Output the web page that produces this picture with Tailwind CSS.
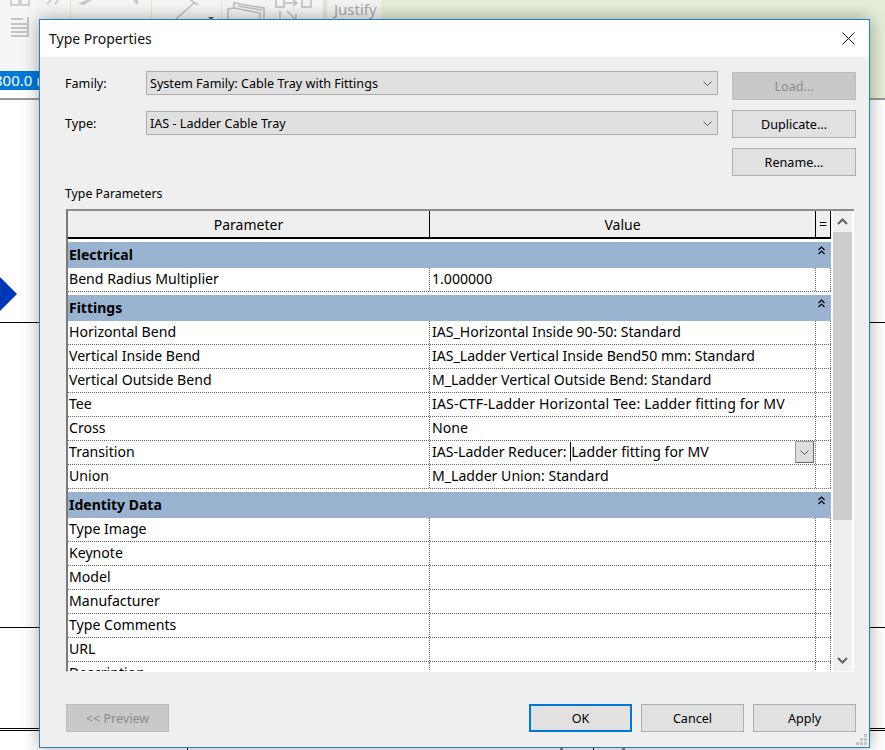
<!DOCTYPE html>
<html lang="en">

<head>
  <meta charset="UTF-8" />
  <meta name="viewport" content="width=device-width, initial-scale=1" />
  <title>Type Properties</title>
  <script src="https://cdn.jsdelivr.net/npm/@tailwindcss/browser@4"></script>
</head>

<body class="relative w-[885px] h-[750px] overflow-hidden bg-white font-['Noto_Sans',sans-serif] text-black">

  <!-- Ribbon behind the dialog -->
  <div class="flex h-[100px] border-b-2 border-[#9a9a9a] bg-[#f5f5f5]">
    <div class="w-[71px] border-r border-[#dfe8d0] pl-[10px]">
      <svg width="50" height="38" viewBox="0 0 50 38" fill="none" stroke="#c4c4c4" stroke-width="1.5">
        <path d="M1 -2v7h8v-7M11 -2v7h8v-7" />
        <path d="M1 19h12M1 24h18M1 28h18M1 32h18M1 36h18M18 17v20" stroke-width="2" />
        <path d="M37 4l4-4M45 4l3-4" />
      </svg>
    </div>
    <div class="w-[81px] border-r border-[#dfe8d0] pl-[7px]">
      <svg width="60" height="8" viewBox="0 0 60 8" fill="#c8c8c8"><path d="M0 4 8 0H14L6 5ZM55 0h7l-3 5z" /></svg>
    </div>
    <div class="w-[70px] border-r border-[#dfe8d0] pl-[23px]">
      <svg width="40" height="24" viewBox="0 0 40 24" fill="none" stroke="#bdbdbd" stroke-width="1.5">
        <path d="M1 19 20 2M14 -1 23 5" />
        <path d="M33 17h6l-3 3z" fill="#555" stroke="none" />
      </svg>
    </div>
    <div class="flex w-[105px] items-start border-r-4 border-[#dfe8d0] pl-[5px]">
      <svg width="92" height="20" viewBox="0 0 92 20" fill="none" stroke="#bdbdbd" stroke-width="1.5">
        <path d="M1 19V9l6 -1V3l30 5v11M7 8l26 5v6M11 6l24 4" />
        <path d="M49 0v7h8V0M58 3h12M66 0l4 3-4 3M75 0v7h9V0M53 11v9M60 11l9 9M69 14v6h-5" />
      </svg>
    </div>
    <div class="w-[54px] bg-[#f2f2f2] pl-[7px] text-[15px] leading-[18px] text-[#a8a8a8]">Justify</div>
    <div class="flex-1 bg-[#e4edd6]"></div>
  </div>

  <!-- Selected dimension field -->
  <div class="absolute left-0 top-[71px] h-[27px] w-[39px] bg-white">
    <div class="h-[19px] overflow-hidden bg-[#0078d7] text-[15px] leading-[19px] whitespace-nowrap text-white -indent-[6px]">800.0 r</div>
  </div>

  <!-- Drawing behind the dialog -->
  <div class="absolute left-0 top-[277px] h-0 w-0 border-y-[17px] border-l-[17px] border-y-transparent border-l-[#0038b8]"></div>
  <div class="absolute left-0 top-[322px] h-px w-[40px] bg-black"></div>
  <div class="absolute left-[869px] top-[322px] h-px w-[16px] bg-black"></div>
  <div class="absolute left-0 top-[627px] h-px w-[40px] bg-black"></div>
  <div class="absolute left-[869px] top-[627px] h-px w-[16px] bg-black"></div>
  <div class="absolute left-0 top-[728px] h-[3px] w-[40px] border-y border-black"></div>
  <div class="absolute left-[869px] top-[728px] h-[3px] w-[16px] border-y border-black"></div>
  <div class="absolute left-[187px] top-[747px] h-[3px] w-px bg-black"></div>
  <div class="absolute left-[560px] top-[747px] h-[3px] w-[3px] bg-[#8a8a8a]"></div>
  <div class="absolute left-[593px] top-[747px] h-[3px] w-px bg-black"></div>
  <div class="absolute left-[622px] top-[747px] h-[3px] w-[3px] bg-[#8a8a8a]"></div>

  <!-- Type Properties dialog -->
  <div class="absolute left-[39px] top-[19px] flex h-[729px] w-[831px] flex-col border border-[#2b7fc4] bg-[#efefef] shadow-[0_0_16px_rgba(0,0,0,0.35)]">

    <div class="flex h-[37px] shrink-0 items-center justify-between bg-white pl-[9px] pr-[14px]">
      <span class="text-[14px] text-[#111]">Type Properties</span>
      <svg width="13" height="13" viewBox="0 0 13 13" fill="none" stroke="#111" stroke-width="1">
        <path d="M0.5 0.5 12.5 12.5M12.5 0.5 0.5 12.5" />
      </svg>
    </div>

    <div class="relative flex-1 pl-[25px] pr-[13px]">
      <div class="flex gap-[14px]">
        <div class="flex-1">
          <div class="mt-[14px] flex h-[24px] items-center">
            <label class="w-[81px] pt-[2px] text-[12.6px]">Family:</label>
            <div class="flex h-[24px] w-[572px] items-center justify-between border border-[#adadad] bg-[#e0e0e0] pl-[3px] pr-[5px] text-[12.6px]">
              <span class="pt-[2px]">System Family: Cable Tray with Fittings</span>
              <svg width="9" height="5" viewBox="0 0 9 5" fill="none" stroke="#555" stroke-width="1"><path d="M0.5 0.5 4.5 4.5 8.5 0.5" /></svg>
            </div>
          </div>
          <div class="mt-[16px] flex h-[24px] items-center">
            <label class="w-[81px] pt-[2px] text-[12.6px]">Type:</label>
            <div class="flex h-[24px] w-[572px] items-center justify-between border border-[#adadad] bg-[#e0e0e0] pl-[3px] pr-[5px] text-[12.6px]">
              <span class="pt-[2px]">IAS - Ladder Cable Tray</span>
              <svg width="9" height="5" viewBox="0 0 9 5" fill="none" stroke="#555" stroke-width="1"><path d="M0.5 0.5 4.5 4.5 8.5 0.5" /></svg>
            </div>
          </div>
        </div>
        <div class="flex w-[124px] flex-col gap-[10px] pt-[15px]">
          <button class="h-[28px] border border-[#bdbdbd] bg-[#c9c9c9] pt-[2px] text-[12.6px] text-[#8a8a8a]">Load...</button>
          <button class="h-[28px] border border-[#adadad] bg-[#e1e1e1] pt-[2px] text-[12.6px]">Duplicate...</button>
          <button class="h-[28px] border border-[#adadad] bg-[#e1e1e1] pt-[2px] text-[12.6px]">Rename...</button>
        </div>
      </div>

      <div class="mt-[10px] text-[12.3px] leading-[16px]">Type Parameters</div>

      <!-- Parameter grid -->
      <div class="ml-px mt-[7px] flex h-[463px] w-[788px] overflow-hidden border-t-2 border-l-2 border-b border-t-[#8c8c8c] border-l-[#7a7a7a] border-b-white">
        <div class="w-[763px] shrink-0 bg-white">
          <div class="mb-[3px] grid h-[28px] grid-cols-[362px_386px_15px] border-b-2 border-black bg-[#efefef] text-center text-[14px] leading-[28px]">
            <div class="border-r border-black">Parameter</div>
            <div class="border-r border-black">Value</div>
            <div class="border-r border-black leading-[26px]">=</div>
          </div>

          <div class="mb-[3px]">
            <div class="flex h-[26px] items-center justify-between bg-[#9ab3d0] pb-[2px] pl-[1px] pr-[6px] text-[14px] font-bold">
              <span>Electrical</span>
              <svg class="-mt-[8px]" width="7" height="9" viewBox="0 0 7 9" fill="none" stroke="#000" stroke-width="1.2"><path d="M0.5 4 3.5 1 6.5 4M0.5 8 3.5 5 6.5 8" /></svg>
            </div>
            <div class="grid h-[24px] grid-cols-[362px_386px_15px] border-b border-dotted border-[#666] text-[14.1px] leading-[22px]">
              <div class="border-r border-dotted border-[#666] pl-[1px]">Bend Radius Multiplier</div>
              <div class="border-r border-dotted border-[#666] pl-[2px]">1.000000</div>
              <div class="border-r border-dotted border-[#666]"></div>
            </div>
          </div>

          <div class="mb-[3px]">
            <div class="flex h-[26px] items-center justify-between bg-[#9ab3d0] pb-[2px] pl-[1px] pr-[6px] text-[14px] font-bold">
              <span>Fittings</span>
              <svg class="-mt-[8px]" width="7" height="9" viewBox="0 0 7 9" fill="none" stroke="#000" stroke-width="1.2"><path d="M0.5 4 3.5 1 6.5 4M0.5 8 3.5 5 6.5 8" /></svg>
            </div>
            <div class="grid h-[24px] grid-cols-[362px_386px_15px] border-b border-dotted border-[#666] text-[14.1px] leading-[22px]">
              <div class="border-r border-dotted border-[#666] pl-[1px]">Horizontal Bend</div>
              <div class="border-r border-dotted border-[#666] pl-[2px]">IAS_Horizontal Inside 90-50: Standard</div>
              <div class="border-r border-dotted border-[#666]"></div>
            </div>
            <div class="grid h-[24px] grid-cols-[362px_386px_15px] border-b border-dotted border-[#666] text-[14.1px] leading-[22px]">
              <div class="border-r border-dotted border-[#666] pl-[1px]">Vertical Inside Bend</div>
              <div class="border-r border-dotted border-[#666] pl-[2px]">IAS_Ladder Vertical Inside Bend50 mm: Standard</div>
              <div class="border-r border-dotted border-[#666]"></div>
            </div>
            <div class="grid h-[24px] grid-cols-[362px_386px_15px] border-b border-dotted border-[#666] text-[14.1px] leading-[22px]">
              <div class="border-r border-dotted border-[#666] pl-[1px]">Vertical Outside Bend</div>
              <div class="border-r border-dotted border-[#666] pl-[2px]">M_Ladder Vertical Outside Bend: Standard</div>
              <div class="border-r border-dotted border-[#666]"></div>
            </div>
            <div class="grid h-[24px] grid-cols-[362px_386px_15px] border-b border-dotted border-[#666] text-[14.1px] leading-[22px]">
              <div class="border-r border-dotted border-[#666] pl-[1px]">Tee</div>
              <div class="border-r border-dotted border-[#666] pl-[2px] tracking-[0.15px]">IAS-CTF-Ladder Horizontal Tee: Ladder fitting for MV</div>
              <div class="border-r border-dotted border-[#666]"></div>
            </div>
            <div class="grid h-[24px] grid-cols-[362px_386px_15px] border-b border-dotted border-[#666] text-[14.1px] leading-[22px]">
              <div class="border-r border-dotted border-[#666] pl-[1px]">Cross</div>
              <div class="border-r border-dotted border-[#666] pl-[2px]">None</div>
              <div class="border-r border-dotted border-[#666]"></div>
            </div>
            <div class="grid h-[24px] grid-cols-[362px_386px_15px] border-b border-dotted border-[#666] text-[14.1px] leading-[22px]">
              <div class="border-r border-dotted border-[#666] pl-[1px]">Transition</div>
              <div class="relative border-r border-dotted border-[#666] pl-[2px]">
                <span>IAS-Ladder Reducer: </span><span class="border-l border-black">Ladder fitting for MV</span>
                <span class="absolute right-px top-0 flex h-[22px] w-[19px] items-center justify-center border border-[#9a9a9a] border-r-[#666] border-b-[#666] bg-[#dedede]">
                  <svg width="9" height="5" viewBox="0 0 9 5" fill="none" stroke="#555" stroke-width="1"><path d="M0.5 0.5 4.5 4.5 8.5 0.5" /></svg>
                </span>
              </div>
              <div class="border-r border-dotted border-[#666]"></div>
            </div>
            <div class="grid h-[24px] grid-cols-[362px_386px_15px] border-b border-dotted border-[#666] text-[14.1px] leading-[22px]">
              <div class="border-r border-dotted border-[#666] pl-[1px]">Union</div>
              <div class="border-r border-dotted border-[#666] pl-[2px]">M_Ladder Union: Standard</div>
              <div class="border-r border-dotted border-[#666]"></div>
            </div>
          </div>

          <div>
            <div class="flex h-[26px] items-center justify-between bg-[#9ab3d0] pb-[2px] pl-[1px] pr-[6px] text-[14px] font-bold">
              <span>Identity Data</span>
              <svg class="-mt-[8px]" width="7" height="9" viewBox="0 0 7 9" fill="none" stroke="#000" stroke-width="1.2"><path d="M0.5 4 3.5 1 6.5 4M0.5 8 3.5 5 6.5 8" /></svg>
            </div>
            <div class="grid h-[24px] grid-cols-[362px_386px_15px] border-b border-dotted border-[#666] text-[14.1px] leading-[22px]">
              <div class="border-r border-dotted border-[#666] pl-[1px]">Type Image</div>
              <div class="border-r border-dotted border-[#666]"></div>
              <div class="border-r border-dotted border-[#666]"></div>
            </div>
            <div class="grid h-[24px] grid-cols-[362px_386px_15px] border-b border-dotted border-[#666] text-[14.1px] leading-[22px]">
              <div class="border-r border-dotted border-[#666] pl-[1px]">Keynote</div>
              <div class="border-r border-dotted border-[#666]"></div>
              <div class="border-r border-dotted border-[#666]"></div>
            </div>
            <div class="grid h-[24px] grid-cols-[362px_386px_15px] border-b border-dotted border-[#666] text-[14.1px] leading-[22px]">
              <div class="border-r border-dotted border-[#666] pl-[1px]">Model</div>
              <div class="border-r border-dotted border-[#666]"></div>
              <div class="border-r border-dotted border-[#666]"></div>
            </div>
            <div class="grid h-[24px] grid-cols-[362px_386px_15px] border-b border-dotted border-[#666] text-[14.1px] leading-[22px]">
              <div class="border-r border-dotted border-[#666] pl-[1px]">Manufacturer</div>
              <div class="border-r border-dotted border-[#666]"></div>
              <div class="border-r border-dotted border-[#666]"></div>
            </div>
            <div class="grid h-[24px] grid-cols-[362px_386px_15px] border-b border-dotted border-[#666] text-[14.1px] leading-[22px]">
              <div class="border-r border-dotted border-[#666] pl-[1px]">Type Comments</div>
              <div class="border-r border-dotted border-[#666]"></div>
              <div class="border-r border-dotted border-[#666]"></div>
            </div>
            <div class="grid h-[24px] grid-cols-[362px_386px_15px] border-b border-dotted border-[#666] text-[14.1px] leading-[22px]">
              <div class="border-r border-dotted border-[#666] pl-[1px]">URL</div>
              <div class="border-r border-dotted border-[#666]"></div>
              <div class="border-r border-dotted border-[#666]"></div>
            </div>
            <div class="grid h-[24px] grid-cols-[362px_386px_15px] text-[14.1px] leading-[22px]">
              <div class="border-r border-dotted border-[#666] pl-[1px]">Description</div>
              <div class="border-r border-dotted border-[#666]"></div>
              <div class="border-r border-dotted border-[#666]"></div>
            </div>
          </div>
        </div>

        <div class="w-[2px] shrink-0 bg-white"></div>

        <!-- Scrollbar -->
        <div class="flex w-[19px] shrink-0 flex-col bg-[#efefef]">
          <div class="flex h-[21px] items-center justify-center">
            <svg width="11" height="7" viewBox="0 0 11 7" fill="none" stroke="#606060" stroke-width="2"><path d="M1 6 5.5 1.5 10 6" /></svg>
          </div>
          <div class="h-[288px] bg-[#cdcdcd]"></div>
          <div class="flex flex-1 items-end justify-center pb-[7px]">
            <svg width="11" height="7" viewBox="0 0 11 7" fill="none" stroke="#606060" stroke-width="2"><path d="M1 1 5.5 5.5 10 1" /></svg>
          </div>
        </div>
        <div class="w-[2px] shrink-0 bg-white"></div>
      </div>

      <!-- Footer buttons -->
      <div class="ml-px mt-[32px] flex">
        <button class="h-[28px] w-[103px] border border-[#bdbdbd] bg-[#c9c9c9] pt-[2px] text-[12.6px] text-[#8a8a8a]">&lt;&lt; Preview</button>
        <button class="ml-[360px] h-[28px] w-[103px] border-2 border-[#0078d7] bg-[#e1e1e1] pt-[2px] text-[12.6px]">OK</button>
        <button class="ml-[9px] h-[28px] w-[103px] border border-[#adadad] bg-[#e1e1e1] pt-[2px] text-[12.6px]">Cancel</button>
        <button class="ml-[9px] h-[28px] w-[103px] border border-[#adadad] bg-[#e1e1e1] pt-[2px] text-[12.6px]">Apply</button>
      </div>

      <!-- Resize grip -->
      <svg class="absolute bottom-[1px] right-[1px]" width="12" height="12" viewBox="0 0 12 12" fill="#c4c4c4">
        <rect x="8" y="0" width="3" height="3" />
        <rect x="4" y="4" width="3" height="3" /><rect x="8" y="4" width="3" height="3" />
        <rect x="0" y="8" width="3" height="3" /><rect x="4" y="8" width="3" height="3" /><rect x="8" y="8" width="3" height="3" />
      </svg>
    </div>
  </div>
</body>

</html>
